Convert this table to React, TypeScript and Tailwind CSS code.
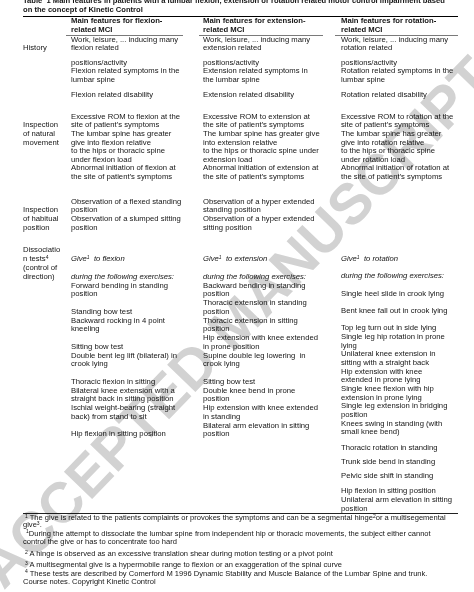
import React from "react";

type Lines = React.ReactNode[];

function P({ lines, className = "" }: { lines: Lines; className?: string }) {
  return (
    <div className={className}>
      {lines.map((l, i) => (
        <div key={i} className="whitespace-nowrap">
          {l}
        </div>
      ))}
    </div>
  );
}

function Sup({ children }: { children: React.ReactNode }) {
  return <sup className="text-[5px]">{children}</sup>;
}

const give = (what: string) => (
  <span className="italic">
    Give<Sup>1</Sup>
    {"\u00a0 "}to {what}
  </span>
);

const during = <span className="italic">during the following exercises:</span>;

export default function App() {
  return (
    <div className="relative h-[592px] w-[474px] overflow-hidden bg-white font-['Liberation_Sans',Arial,sans-serif] text-[7.7px] text-[#151515]">
      {/* caption */}
      <div className="mt-[-3px] pl-[23px] text-[7.6px] font-bold leading-[8.9px]">
        <div className="whitespace-nowrap">
          Table&nbsp; 1 Main features in patients with a lumbar flexion, extension or rotation related motor control impairment based
        </div>
        <div className="whitespace-nowrap">on the concept of Kinetic Control</div>
      </div>

      <div className="ml-[23px] mt-[1px] w-[435px]">
        <div className="h-[1.5px] bg-black" />

        {/* header */}
        <div className="grid grid-cols-[43px_133px_136px_123px] font-bold leading-[8.65px]">
          <div />
          <div>
            <P className="pl-[5px]" lines={["Main features for flexion-", "related MCI"]} />
            <div className="h-px w-[117px] bg-[#7a7a7a]" />
          </div>
          <div>
            <P className="pl-[4px]" lines={["Main features for extension-", "related MCI"]} />
            <div className="h-px w-[124px] bg-[#7a7a7a]" />
          </div>
          <div>
            <P className="pl-[6px]" lines={["Main features for rotation-", "related MCI"]} />
            <div className="h-px w-[123px] bg-[#7a7a7a]" />
          </div>
        </div>

        {/* history */}
        <div className="grid grid-cols-[43px_133px_136px_123px] leading-[8.65px]">
          <P className="pt-[8.65px]" lines={["History"]} />
          <div className="pl-[5px]">
            <P lines={["Work, leisure, ... inducing many", "flexion related"]} />
            <P className="mt-[5.8px]" lines={["positions/activity", "Flexion related symptoms in the", "lumbar spine"]} />
            <P className="mt-[5.8px]" lines={["Flexion related disability"]} />
          </div>
          <div className="pl-[4px]">
            <P lines={["Work, leisure, ... inducing many", "extension related"]} />
            <P className="mt-[5.8px]" lines={["positions/activity", "Extension related symptoms in", "the lumbar spine"]} />
            <P className="mt-[5.8px]" lines={["Extension related disability"]} />
          </div>
          <div className="pl-[6px]">
            <P lines={["Work, leisure, ... inducing many", "rotation related"]} />
            <P className="mt-[5.8px]" lines={["positions/activity", "Rotation related symptoms in the", "lumbar spine"]} />
            <P className="mt-[5.8px]" lines={["Rotation related disability"]} />
          </div>
        </div>

        {/* natural movement */}
        <div className="mt-[13.4px] grid grid-cols-[43px_133px_136px_123px] leading-[8.65px]">
          <P className="pt-[8.65px]" lines={["Inspection", "of natural", "movement"]} />
          <P
            className="pl-[5px]"
            lines={[
              "Excessive ROM to flexion at the",
              "site of patient’s symptoms",
              "The lumbar spine has greater",
              "give into flexion relative",
              "to the hips or thoracic spine",
              "under flexion load",
              "Abnormal initiation of flexion at",
              "the site of patient’s symptoms",
            ]}
          />
          <P
            className="pl-[4px]"
            lines={[
              "Excessive ROM to extension at",
              "the site of patient’s symptoms",
              "The lumbar spine has greater give",
              "into extension relative",
              "to the hips or thoracic spine under",
              "extension load",
              "Abnormal initiation of extension at",
              "the site of patient’s symptoms",
            ]}
          />
          <P
            className="pl-[6px]"
            lines={[
              "Excessive ROM to rotation at the",
              "site of patient’s symptoms",
              "The lumbar spine has greater",
              "give into rotation relative",
              "to the hips or thoracic spine",
              "under rotation load",
              "Abnormal initiation of rotation at",
              "the site of patient’s symptoms",
            ]}
          />
        </div>

        {/* habitual position */}
        <div className="mt-[15.8px] grid grid-cols-[43px_133px_136px_123px] leading-[8.65px]">
          <P className="pt-[8.65px]" lines={["Inspection", "of habitual", "position"]} />
          <P
            className="pl-[5px]"
            lines={["Observation of a flexed standing", "position", "Observation of a slumped sitting", "position"]}
          />
          <P
            className="pl-[4px]"
            lines={["Observation of a hyper extended", "standing position", "Observation of a hyper extended", "sitting position"]}
          />
          <div />
        </div>

        {/* dissociation tests */}
        <div className="mt-[13.2px] grid grid-cols-[43px_133px_136px_123px]">
          <P
            className="leading-[9px]"
            lines={[
              "Dissociatio",
              <>
                n tests<Sup>4</Sup>
              </>,
              "(control of",
              "direction)",
            ]}
          />
          <div className="pl-[5px] pt-[10px] leading-[8.75px]">
            <P lines={[give("flexion")]} />
            <P className="mt-[8.75px]" lines={[during, "Forward bending in standing", "position"]} />
            <P className="mt-[8.75px]" lines={["Standing bow test", "Backward rocking in 4 point", "kneeling"]} />
            <P className="mt-[8.75px]" lines={["Sitting bow test", "Double bent leg lift (bilateral) in", "crook lying"]} />
            <P
              className="mt-[8.75px]"
              lines={[
                "Thoracic flexion in sitting",
                "Bilateral knee extension with a",
                "straight back in sitting position",
                "Ischial weight-bearing (straight",
                "back) from stand to sit",
              ]}
            />
            <P className="mt-[8.75px]" lines={["Hip flexion in sitting position"]} />
          </div>
          <div className="pl-[4px] pt-[10px] leading-[8.75px]">
            <P lines={[give("extension")]} />
            <P
              className="mt-[8.75px]"
              lines={[
                during,
                "Backward bending in standing",
                "position",
                "Thoracic extension in standing",
                "position",
                "Thoracic extension in sitting",
                "position",
                "Hip extension with knee extended",
                "in prone position",
                "Supine double leg lowering \u00a0in",
                "crook lying",
              ]}
            />
            <P
              className="mt-[8.75px]"
              lines={[
                "Sitting bow test",
                "Double knee bend in prone",
                "position",
                "Hip extension with knee extended",
                "in standing",
                "Bilateral arm elevation in sitting",
                "position",
              ]}
            />
          </div>
          <div className="pl-[6px] pt-[10px] leading-[8.65px]">
            <P lines={[give("rotation")]} />
            <P className="mt-[8.35px]" lines={[during]} />
            <P className="mt-[9.35px]" lines={["Single heel slide in crook lying"]} />
            <P className="mt-[8.35px]" lines={["Bent knee fall out in crook lying"]} />
            <P
              className="mt-[8.35px]"
              lines={[
                "Top leg turn out in side lying",
                "Single leg hip rotation in prone",
                "lying",
                "Unilateral knee extension in",
                "sitting with a straight back",
                "Hip extension with knee",
                "extended in prone lying",
                "Single knee flexion with hip",
                "extension in prone lying",
                "Single leg extension in bridging",
                "position",
                "Knees swing in standing (with",
                "small knee bend)",
              ]}
            />
            <P className="mt-[7.55px]" lines={["Thoracic rotation in standing"]} />
            <P className="mt-[5.35px]" lines={["Trunk side bend in standing"]} />
            <P className="mt-[5.35px]" lines={["Pelvic side shift in standing"]} />
            <P
              className="mt-[6.35px]"
              lines={["Hip flexion in sitting position", "Unilateral arm elevation in sitting", "position"]}
            />
          </div>
        </div>

        <div className="h-px bg-[#222]" />

        {/* footnotes */}
        <div className="text-[7.55px] leading-[8.5px]">
          <div className="whitespace-nowrap pl-[2px]">
            <Sup>1</Sup> The give is related to the patients complaints or provokes the symptoms and can be a segmental hinge<Sup>2</Sup>or a multisegemental
          </div>
          <div className="mt-[-1.5px] whitespace-nowrap">
            give<Sup>3</Sup>.
          </div>
          <div className="whitespace-nowrap pl-[3px]">
            <Sup>1</Sup>During the attempt to dissociate the lumbar spine from independent hip or thoracic movements, the subject either cannot
          </div>
          <div className="whitespace-nowrap">control the give or has to concentrate too hard</div>
          <div className="mt-[3.5px] whitespace-nowrap pl-[2px]">
            <Sup>2</Sup> A hinge is observed as an excessive translation shear during motion testing or a pivot point
          </div>
          <div className="mt-[2.5px] whitespace-nowrap pl-[2px]">
            <Sup>3</Sup> A multisegmental give is a hypermobile range to flexion or an exaggeration of the spinal curve
          </div>
          <div className="whitespace-nowrap pl-[2px]">
            <Sup>4</Sup> These tests are described by Comerford M 1996 Dynamic Stability and Muscle Balance of the Lumbar Spine and trunk.
          </div>
          <div className="whitespace-nowrap">Course notes. Copyright Kinetic Control</div>
        </div>
      </div>

      {/* watermark */}
      <div className="pointer-events-none absolute left-[236px] top-[322px] -translate-x-1/2 -translate-y-1/2 -rotate-[46deg] whitespace-nowrap text-[57px] leading-none font-bold text-[#d2d2d2] mix-blend-multiply">
        ACCEPTED MANUSCRIPT
      </div>
    </div>
  );
}
